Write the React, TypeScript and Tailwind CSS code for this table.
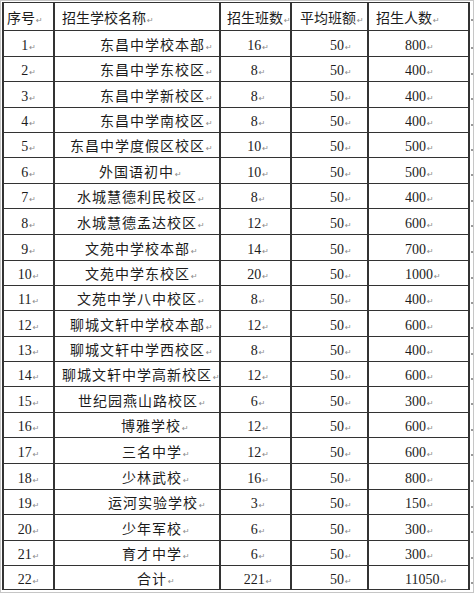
const rows: {
  no: string;
  name: string;
  pad: string;
  classes: string;
  avg: string;
  total: string;
  h: string;
}[] = [
  { no: "1", name: "东昌中学校本部", pad: "pl-[45px]", classes: "16", avg: "50", total: "800", h: "h-[26px]" },
  { no: "2", name: "东昌中学东校区", pad: "pl-[45px]", classes: "8", avg: "50", total: "400", h: "h-[25px]" },
  { no: "3", name: "东昌中学新校区", pad: "pl-[45px]", classes: "8", avg: "50", total: "400", h: "h-[26px]" },
  { no: "4", name: "东昌中学南校区", pad: "pl-[45px]", classes: "8", avg: "50", total: "400", h: "h-[25px]" },
  { no: "5", name: "东昌中学度假区校区", pad: "pl-[15px]", classes: "10", avg: "50", total: "500", h: "h-[25px]" },
  { no: "6", name: "外国语初中", pad: "pl-[44px]", classes: "10", avg: "50", total: "500", h: "h-[26px]" },
  { no: "7", name: "水城慧德利民校区", pad: "pl-[22px]", classes: "8", avg: "50", total: "400", h: "h-[25px]" },
  { no: "8", name: "水城慧德孟达校区", pad: "pl-[22px]", classes: "12", avg: "50", total: "600", h: "h-[26px]" },
  { no: "9", name: "文苑中学校本部", pad: "pl-[30px]", classes: "14", avg: "50", total: "700", h: "h-[26px]" },
  { no: "10", name: "文苑中学东校区", pad: "pl-[30px]", classes: "20", avg: "50", total: "1000", h: "h-[25px]" },
  { no: "11", name: "文苑中学八中校区", pad: "pl-[22px]", classes: "8", avg: "50", total: "400", h: "h-[25px]" },
  { no: "12", name: "聊城文轩中学校本部", pad: "pl-[15px]", classes: "12", avg: "50", total: "600", h: "h-[26px]" },
  { no: "13", name: "聊城文轩中学西校区", pad: "pl-[15px]", classes: "8", avg: "50", total: "400", h: "h-[25px]" },
  { no: "14", name: "聊城文轩中学高新校区", pad: "pl-[7px]", classes: "12", avg: "50", total: "600", h: "h-[25px]" },
  { no: "15", name: "世纪园燕山路校区", pad: "pl-[23px]", classes: "6", avg: "50", total: "300", h: "h-[26px]" },
  { no: "16", name: "博雅学校", pad: "pl-[66px]", classes: "12", avg: "50", total: "600", h: "h-[25px]" },
  { no: "17", name: "三名中学", pad: "pl-[67px]", classes: "12", avg: "50", total: "600", h: "h-[26px]" },
  { no: "18", name: "少林武校", pad: "pl-[67px]", classes: "16", avg: "50", total: "800", h: "h-[26px]" },
  { no: "19", name: "运河实验学校", pad: "pl-[53px]", classes: "3", avg: "50", total: "150", h: "h-[25px]" },
  { no: "20", name: "少年军校", pad: "pl-[67px]", classes: "6", avg: "50", total: "300", h: "h-[26px]" },
  { no: "21", name: "育才中学", pad: "pl-[67px]", classes: "6", avg: "50", total: "300", h: "h-[25px]" },
  { no: "22", name: "合计", pad: "pl-[82px]", classes: "221", avg: "50", total: "11050", h: "h-[24px]" },
];

// cell text followed by Word's paragraph mark
function Txt({ children }: { children: React.ReactNode }) {
  return (
    <span className="whitespace-nowrap">
      {children}
      <span className="ml-[1px] text-[8px] text-[#8a8a8a] font-['DejaVu_Sans',sans-serif] tracking-normal">↵</span>
    </span>
  );
}

function RowDot({ top }: { top: string }) {
  return (
    <div className="w-[3px] shrink-0">
      <div className={`ml-[1px] w-[2px] h-[2px] bg-[#9a9a9a] ${top}`} />
    </div>
  );
}

export default function App() {
  const cell = "flex items-center pt-[4px] border-b border-r-2 border-[#333] shrink-0 whitespace-nowrap";

  return (
    <div className="w-[474px] h-[593px] bg-white border border-[#c6c6c6] overflow-hidden text-[14px] leading-none text-[#1c1c1c] font-['Liberation_Serif','Noto_Sans_CJK_SC',serif]">
      <div className="ml-[1px] mt-[1px]">
        {/* header */}
        <div className="flex h-[29px]">
          <div className={`${cell} border-t border-l-2 w-[53px] pl-[3px]`}>
            <Txt>序号</Txt>
          </div>
          <div className={`${cell} border-t w-[166px] pl-[7px]`}>
            <Txt>招生学校名称</Txt>
          </div>
          <div className={`${cell} border-t w-[71px] pl-[6px]`}>
            <Txt>招生班数</Txt>
          </div>
          <div className={`${cell} border-t w-[77px] pl-[8px]`}>
            <Txt>平均班额</Txt>
          </div>
          <div className={`${cell} border-t w-[101px] pl-[7px]`}>
            <Txt>招生人数</Txt>
          </div>
          <RowDot top="mt-[17px]" />
        </div>

        {rows.map((r) => (
          <div key={r.no} className={`flex ${r.h}`}>
            <div className={`${cell} border-l-2 w-[53px] justify-center`}>
              <Txt>{r.no}</Txt>
            </div>
            <div className={`${cell} w-[166px] ${r.pad} tracking-[1px]`}>
              <Txt>{r.name}</Txt>
            </div>
            <div className={`${cell} w-[71px] justify-center pl-[5px]`}>
              <Txt>{r.classes}</Txt>
            </div>
            <div className={`${cell} w-[77px] pl-[38px]`}>
              <Txt>{r.avg}</Txt>
            </div>
            <div className={`${cell} w-[101px] pl-[36px]`}>
              <Txt>{r.total}</Txt>
            </div>
            <RowDot top="mt-[16px]" />
          </div>
        ))}
      </div>
    </div>
  );
}
